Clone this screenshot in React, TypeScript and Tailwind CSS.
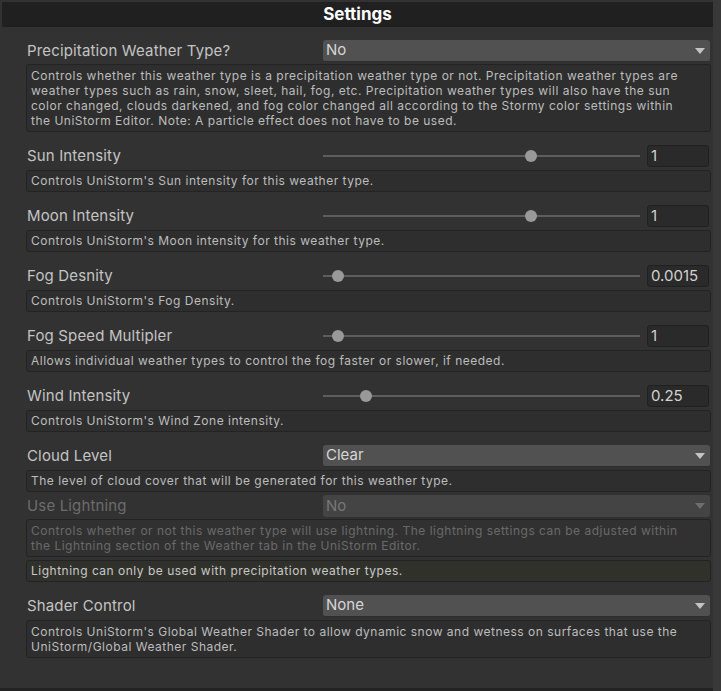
import React from "react";

const font = { fontFamily: "Inter, 'Noto Sans', sans-serif" };

function Arrow({ dim }: { dim?: boolean }) {
  return (
    <svg width="10" height="6" viewBox="0 0 10 6" className="shrink-0">
      <path d="M0 0 L10 0 L5 6 Z" fill={dim ? "#6e6e6e" : "#c4c4c4"} />
    </svg>
  );
}

function Dropdown({ label, value, disabled }: { label: string; value: string; disabled?: boolean }) {
  return (
    <div className="flex items-center h-[22px]">
      <div
        className={`w-[297px] shrink-0 text-[15px] pl-[1px] tracking-[0.15px] ${
          disabled ? "text-[#6c6c6c]" : "text-[#c4c4c4]"
        }`}
      >
        {label}
      </div>
      <div
        className={`flex-1 mr-[1px] h-[22px] rounded-[3px] flex items-center justify-between pl-[3px] pr-[5px] text-[15px] ${
          disabled ? "bg-[#444444] text-[#777777]" : "bg-[#515151] text-[#d6d6d6] border-b border-[#2e2e2e]"
        }`}
      >
        <span>{value}</span>
        <Arrow dim={disabled} />
      </div>
    </div>
  );
}

function SliderRow({ label, value, pos }: { label: string; value: string; pos: number }) {
  return (
    <div className="flex items-center h-[22px]">
      <div className="w-[297px] shrink-0 text-[15px] pl-[1px] tracking-[0.15px] text-[#c4c4c4]">{label}</div>
      <div className="relative w-[317px] h-[22px] flex items-center">
        <div className="w-full h-[2px] bg-[#5e5e5e]" />
        <div
          className="absolute top-1/2 w-[12px] h-[12px] -mt-[6px] -ml-[6px] rounded-full bg-[#999999]"
          style={{ left: `${pos * 100}%` }}
        />
      </div>
      <div className="ml-[7px] w-[62px] h-[22px] rounded-[3px] bg-[#2a2a2a] border border-[#202020] flex items-center pl-[3px] text-[15px] text-[#d2d2d2]">
        {value}
      </div>
    </div>
  );
}

function Help({
  children,
  disabled,
  warn,
  multi,
}: {
  children: React.ReactNode;
  disabled?: boolean;
  warn?: boolean;
  multi?: boolean;
}) {
  return (
    <div
      className={`rounded-[3px] border border-[#232323] px-[4px] text-[12px] tracking-[0.5px] whitespace-nowrap ${
        multi ? "py-[3px] leading-[15px]" : "py-[2px] leading-[16px]"
      } ${warn ? "bg-[#31312b] text-[#c8c8c8]" : disabled ? "bg-[#313131] text-[#6a6a6a]" : "bg-[#2e2e2e] text-[#bdbdbd]"}`}
    >
      {children}
    </div>
  );
}

export default function App() {
  const sliders = [
    { label: "Sun Intensity", value: "1", pos: 0.656, help: "Controls UniStorm's Sun intensity for this weather type." },
    { label: "Moon Intensity", value: "1", pos: 0.656, help: "Controls UniStorm's Moon intensity for this weather type." },
    { label: "Fog Desnity", value: "0.0015", pos: 0.047, help: "Controls UniStorm's Fog Density." },
    {
      label: "Fog Speed Multipler",
      value: "1",
      pos: 0.047,
      help: "Allows individual weather types to control the fog faster or slower, if needed.",
    },
    { label: "Wind Intensity", value: "0.25", pos: 0.136, help: "Controls UniStorm's Wind Zone intensity." },
  ];
  return (
    <div className="w-[721px] h-[691px] bg-[#383838] flex overflow-hidden" style={font}>
      <div className="w-[713px] h-[691px] flex flex-col shrink-0">
        <div className="w-[713px] h-[688px] bg-[#323232] pl-[2px] pt-[2px] flex flex-col">
          <div className="w-[711px] h-[25px] bg-[#202020] flex items-center justify-center text-white font-bold text-[17px]">
            Settings
          </div>
          <div className="pl-[24px] pr-[2px] flex flex-col">
            <div className="mt-[13px]">
              <Dropdown label="Precipitation Weather Type?" value="No" />
            </div>
            <div className="mt-[2px]">
              <Help multi>
                Controls whether this weather type is a precipitation weather type or not. Precipitation weather types are
                <br />
                weather types such as rain, snow, sleet, hail, fog, etc. Precipitation weather types will also have the sun
                <br />
                color changed, clouds darkened, and fog color changed all according to the Stormy color settings within
                <br />
                the UniStorm Editor. Note: A particle effect does not have to be used.
              </Help>
            </div>
            {sliders.map((s) => (
              <div key={s.label} className="mt-[13px] flex flex-col gap-[3px]">
                <SliderRow label={s.label} value={s.value} pos={s.pos} />
                <Help>{s.help}</Help>
              </div>
            ))}
            <div className="mt-[13px]">
              <Dropdown label="Cloud Level" value="Clear" />
            </div>
            <div className="mt-[3px]">
              <Help>The level of cloud cover that will be generated for this weather type.</Help>
            </div>
            <div className="mt-[3px]">
              <Dropdown label="Use Lightning" value="No" disabled />
            </div>
            <div className="mt-[2px]">
              <Help disabled multi>
                Controls whether or not this weather type will use lightning. The lightning settings can be adjusted within
                <br />
                the Lightning section of the Weather tab in the UniStorm Editor.
              </Help>
            </div>
            <div className="mt-[3px]">
              <Help warn>Lightning can only be used with precipitation weather types.</Help>
            </div>
            <div className="mt-[13px]">
              <Dropdown label="Shader Control" value="None" />
            </div>
            <div className="mt-[3px]">
              <Help multi>
                Controls UniStorm's Global Weather Shader to allow dynamic snow and wetness on surfaces that use the
                <br />
                UniStorm/Global Weather Shader.
              </Help>
            </div>
          </div>
        </div>
        <div className="h-[3px] bg-[#232323]" />
      </div>
    </div>
  );
}
